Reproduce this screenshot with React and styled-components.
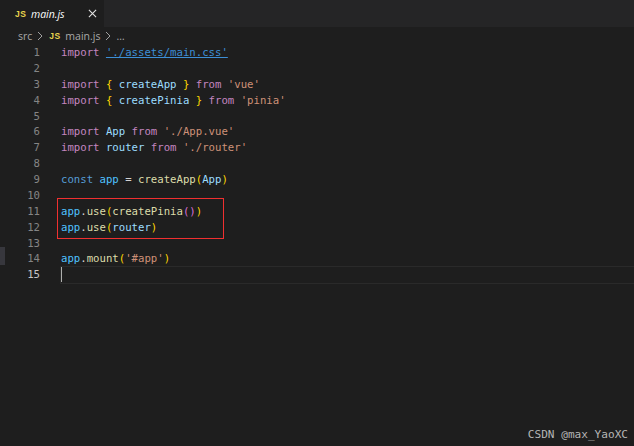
import React from 'react'
import styled, { createGlobalStyle } from 'styled-components'

const Global = createGlobalStyle`
  html, body { margin: 0; padding: 0; background: #1e1e1e; }
`

const colors = {
  kw: '#c586c0',
  blue: '#569cd6',
  var: '#9cdcfe',
  con: '#4fc1ff',
  fn: '#dcdcaa',
  str: '#ce9178',
  link: '#3d8fd6',
  y: '#ffd700',
  p: '#da70d6',
  w: '#d4d4d4',
}

const lines = [
  [['import ', 'kw'], ["'./assets/main.css'", 'link']],
  [],
  [['import ', 'kw'], ['{ ', 'y'], ['createApp', 'var'], [' } ', 'y'], ['from ', 'kw'], ["'vue'", 'str']],
  [['import ', 'kw'], ['{ ', 'y'], ['createPinia', 'var'], [' } ', 'y'], ['from ', 'kw'], ["'pinia'", 'str']],
  [],
  [['import ', 'kw'], ['App ', 'var'], ['from ', 'kw'], ["'./App.vue'", 'str']],
  [['import ', 'kw'], ['router ', 'var'], ['from ', 'kw'], ["'./router'", 'str']],
  [],
  [['const ', 'blue'], ['app ', 'con'], ['= ', 'w'], ['createApp', 'fn'], ['(', 'y'], ['App', 'var'], [')', 'y']],
  [],
  [['app', 'con'], ['.', 'w'], ['use', 'fn'], ['(', 'y'], ['createPinia', 'fn'], ['()', 'p'], [')', 'y']],
  [['app', 'con'], ['.', 'w'], ['use', 'fn'], ['(', 'y'], ['router', 'var'], [')', 'y']],
  [],
  [['app', 'con'], ['.', 'w'], ['mount', 'fn'], ['(', 'y'], ["'#app'", 'str'], [')', 'y']],
  [],
]

export default function App() {
  return (
    <>
      <Global />
      <Window>
        <TabBar>
          <Tab>
            <JsBadge>JS</JsBadge>
            <TabName>main.js</TabName>
            <CloseIcon viewBox="0 0 10 10">
              <path d="M1 1 L9 9 M9 1 L1 9" stroke="#e4e4e4" strokeWidth="1.2" fill="none" />
            </CloseIcon>
          </Tab>
        </TabBar>
        <Crumbs>
          <CrumbText>src</CrumbText>
          <Chevron />
          <JsBadge>JS</JsBadge>
          <CrumbText>main.js</CrumbText>
          <Chevron />
          <CrumbText>…</CrumbText>
        </Crumbs>
        <Editor>
          <Marker />
          <Gutter>
            {lines.map((_, i) => (
              <LineNo key={i} $active={i === 14}>{i + 1}</LineNo>
            ))}
          </Gutter>
          <Code>
            {lines.map((tokens, i) => (
              <Line key={i} $current={i === 14}>
                {i === 14 && <Cursor />}
                {tokens.map(([text, kind], j) => (
                  <Token key={j} $kind={kind}>{text}</Token>
                ))}
              </Line>
            ))}
            <Highlight />
          </Code>
        </Editor>
        <Watermark>CSDN @max_YaoXC</Watermark>
      </Window>
    </>
  )
}

function Chevron() {
  return (
    <ChevronIcon viewBox="0 0 6 10">
      <path d="M1 1 L5 5 L1 9" stroke="#a0a0a0" strokeWidth="1" fill="none" />
    </ChevronIcon>
  )
}

const Window = styled.div`
  position: relative;
  width: 634px;
  height: 446px;
  overflow: hidden;
  background: #1e1e1e;
  display: flex;
  flex-direction: column;
`

const TabBar = styled.div`
  height: 27px;
  background: #252526;
  display: flex;
  flex-shrink: 0;
`

const Tab = styled.div`
  width: 104px;
  background: #1e1e1e;
  display: flex;
  align-items: center;
  padding-left: 15px;
  box-sizing: border-box;
`

const JsBadge = styled.span`
  font: bold 8.5px "Liberation Sans", sans-serif;
  letter-spacing: 0.5px;
  color: #e8d44d;
  width: 10px;
  margin-right: 6px;
`

const TabName = styled.span`
  font: italic 10.5px "Open Sans", sans-serif;
  color: #ffffff;
  width: 57px;
`

const CloseIcon = styled.svg`
  width: 9px;
  height: 9px;
`

const Crumbs = styled.div`
  height: 18px;
  padding-left: 18px;
  display: flex;
  align-items: center;
  gap: 5px;
  flex-shrink: 0;

  ${JsBadge} {
    margin: 0 1px;
  }
`

const CrumbText = styled.span`
  font: 10.5px "Open Sans", sans-serif;
  color: #a9a9a9;
`

const ChevronIcon = styled.svg`
  width: 6px;
  height: 10px;
`

const Editor = styled.div`
  position: relative;
  display: flex;
  flex: 1;
  font: 10.67px/15.875px "DejaVu Sans Mono", monospace;
`

const Marker = styled.div`
  position: absolute;
  left: 0;
  top: 202px;
  width: 5px;
  height: 18px;
  background: #37373d;
`

const Gutter = styled.div`
  width: 40px;
  flex-shrink: 0;
  text-align: right;
`

const LineNo = styled.div`
  height: 15.875px;
  color: ${(p) => (p.$active ? '#c6c6c6' : '#858585')};
`

const Code = styled.div`
  position: relative;
  flex: 1;
  margin-left: 21px;
`

const Line = styled.div`
  position: relative;
  height: 15.875px;
  white-space: pre;
  ${(p) => p.$current && `
    box-shadow: 0 0 0 1px #2a2a2a;
  `}
`

const Cursor = styled.span`
  position: absolute;
  left: 0;
  top: 0;
  width: 1px;
  height: 15px;
  background: #aeafad;
`

const Token = styled.span`
  color: ${(p) => colors[p.$kind]};
  ${(p) => p.$kind === 'link' && 'text-decoration: underline;'}
`

const Highlight = styled.div`
  position: absolute;
  left: -4px;
  top: 153px;
  width: 165px;
  height: 39px;
  border: 1px solid #f03030;
`

const Watermark = styled.div`
  position: absolute;
  right: 6px;
  bottom: 5px;
  font: 11.1px "DejaVu Sans Mono", monospace;
  color: #b5b5b5;
`
